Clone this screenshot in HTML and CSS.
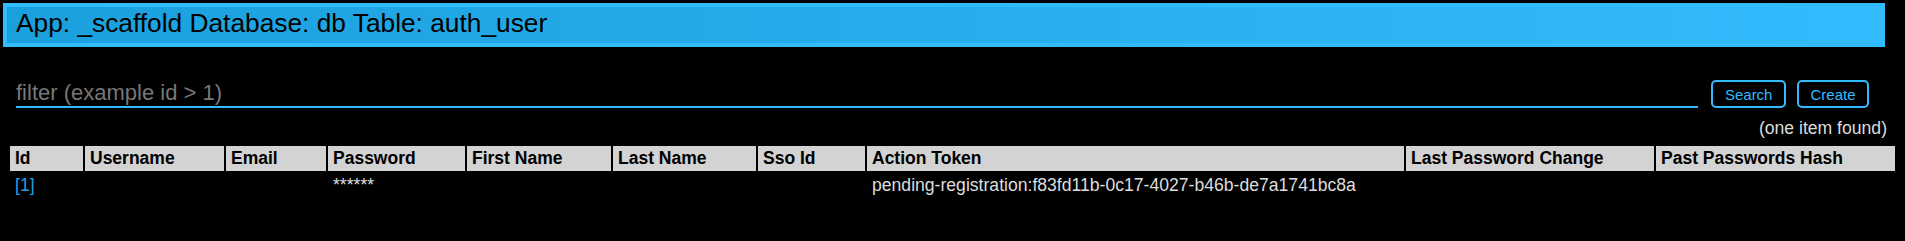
FILE: index.html
```html
<!DOCTYPE html>
<html>
<head>
<meta charset="utf-8">
<title>auth_user</title>
<link rel="stylesheet" href="styles.css">
</head>
<body>
<h1 class="title">App: _scaffold Database: db Table: auth_user</h1>
<form class="filter-row">
  <input class="filter-input" type="text" placeholder="filter (example id &gt; 1)">
  <button class="btn" type="button">Search</button>
  <button class="btn" type="button">Create</button>
</form>
<div class="count">(one item found)</div>
<table class="grid">
  <colgroup>
    <col class="c-id"><col class="c-user"><col class="c-email"><col class="c-pass"><col class="c-first"><col class="c-last"><col class="c-sso"><col class="c-token"><col class="c-change"><col class="c-hash">
  </colgroup>
  <thead>
    <tr><th>Id</th><th>Username</th><th>Email</th><th>Password</th><th>First Name</th><th>Last Name</th><th>Sso Id</th><th>Action Token</th><th>Last Password Change</th><th>Past Passwords Hash</th></tr>
  </thead>
  <tbody>
    <tr><td><a class="rowlink" href="#">[1]</a></td><td></td><td></td><td>******</td><td></td><td></td><td></td><td>pending-registration:f83fd11b-0c17-4027-b46b-de7a1741bc8a</td><td></td><td></td></tr>
  </tbody>
</table>
</body>
</html>
```
FILE: styles.css
```css
html, body {
  margin: 0;
  padding: 0;
  background: #000;
  font-family: "Liberation Sans", Arial, sans-serif;
  color: #ddd;
}
.title {
  margin: 3px 20px 0 3px;
  border: 4px solid #33bbff;
  background: linear-gradient(to right, #1aa0dc, #33bbff);
  color: #000;
  font-size: 26.3px;
  font-weight: normal;
  line-height: 32px;
  height: 32px;
  box-sizing: content-box;
  padding: 0 0 4px 9px;
  white-space: nowrap;
}
.filter-row {
  display: flex;
  align-items: flex-end;
  margin: 33px 36px 0 16px;
}
.filter-input {
  flex: 1;
  height: 28px;
  box-sizing: border-box;
  background: transparent;
  border: none;
  border-bottom: 2px solid #33bbff;
  outline: none;
  padding: 0;
  margin: 0 13px 0 0;
  font-family: "Liberation Sans", Arial, sans-serif;
  font-size: 22px;
  color: #ddd;
}
.filter-input::placeholder {
  color: #777;
}
.btn {
  height: 28px;
  box-sizing: border-box;
  border: 2px solid #33bbff;
  border-radius: 5px;
  background: #000;
  color: #33bbff;
  font-family: "Liberation Sans", Arial, sans-serif;
  font-size: 15px;
  padding: 0 11.5px;
  margin: 0;
}
.btn + .btn {
  margin-left: 11px;
}
.count {
  text-align: right;
  font-size: 17.6px;
  line-height: 20px;
  margin: 10px 18px 0 0;
  color: #ddd;
}
.grid {
  margin: 6px 8px 0 8px;
  width: calc(100% - 16px);
  border-collapse: separate;
  border-spacing: 2px;
  table-layout: fixed;
}
.grid th, .grid td {
  box-sizing: border-box;
  text-align: left;
  padding: 2px 5px;
  white-space: nowrap;
  overflow: hidden;
}
.grid th {
  background: #d3d3d3;
  color: #000;
  font-weight: bold;
  font-size: 17.5px;
  line-height: 21px;
}
.grid td {
  font-size: 17.6px;
  line-height: 20px;
  color: #ddd;
  vertical-align: top;
}
.rowlink {
  color: #1e9fe6;
  text-decoration: none;
}
.c-id { width: 73px; }
.c-user { width: 139px; }
.c-email { width: 100px; }
.c-pass { width: 137px; }
.c-first { width: 144px; }
.c-last { width: 143px; }
.c-sso { width: 107px; }
.c-token { width: 537px; }
.c-change { width: 248px; }
.c-hash { width: auto; }
```
